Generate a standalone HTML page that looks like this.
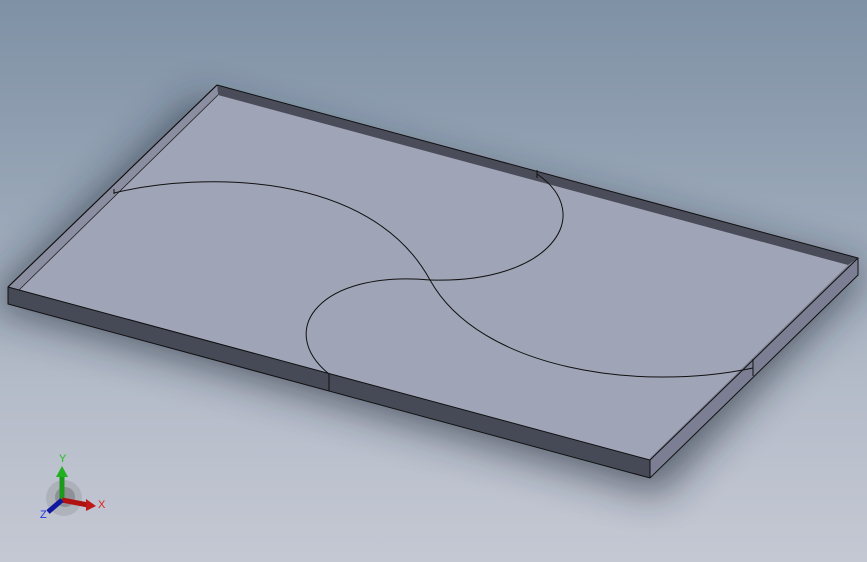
<!DOCTYPE html>
<html><head><style>
html,body{margin:0;padding:0;width:867px;height:562px;overflow:hidden}
body{background:linear-gradient(180deg,#7f91a5 0%,#97a5b6 35%,#b5bcc9 70%,#c4c8d3 100%)}
</style></head><body>
<svg width="867" height="562" viewBox="0 0 867 562" xmlns="http://www.w3.org/2000/svg" style="position:absolute;left:0;top:0">
<defs>
<filter id="b" x="-20%" y="-20%" width="140%" height="140%"><feGaussianBlur stdDeviation="20"/></filter>
</defs>
<polygon points="195,100 870,270 660,495 -15,305" fill="#1e2834" opacity="0.6" filter="url(#b)"/>
<polygon points="217,85 858,258 650,460 8,287" fill="#a0a4b7"/>
<polygon points="217,85 858,258 848,265 218,95" fill="#4a4d59"/>
<polygon points="217,85 218,95 17,292 8,287" fill="#8a8ea0"/>
<line x1="217" y1="85" x2="8" y2="287" stroke="#111" stroke-width="1"/>
<line x1="218" y1="95" x2="17" y2="292" stroke="#222" stroke-width="0.8"/>
<polygon points="858,258 848,265 650,458 650,460" fill="#7a7e90"/>
<polygon points="8,287 650,460 650,478 8,304" fill="#464956"/>
<polygon points="650,460 858,258 858,275 650,478" fill="#7c7f93"/>
<g stroke="#111" stroke-width="1" fill="none">
<polyline points="217,85 858,258 858,275 650,478 8,304 8,287 217,85"/>
<line x1="650" y1="460" x2="650" y2="478"/>
<line x1="8" y1="287" x2="650" y2="460"/>
<line x1="650" y1="460" x2="858" y2="258"/>
<line x1="329" y1="374" x2="329" y2="391"/>
<line x1="753" y1="359" x2="753" y2="376"/>
<line x1="537" y1="170" x2="537" y2="178"/>
<line x1="114" y1="189" x2="114" y2="194"/>
<path d="M114,193 C200,172 370,170 430,280"/>
<path d="M537,174 C597,215 550,284 430,280"/>
<path d="M430,280 C480,370 640,392 753,368"/>
<path d="M329,374 C275,330 320,270 430,280"/>
</g>
<circle cx="64" cy="498" r="18" fill="#888" opacity="0.3"/>
<circle cx="65" cy="497" r="10" fill="#555" opacity="0.35"/>
<line x1="62" y1="500" x2="62" y2="475" stroke="#1a9a1a" stroke-width="5"/>
<polygon points="56,477 68,477 62,466" fill="#22b022"/>
<line x1="62" y1="500" x2="88" y2="505" stroke="#b01010" stroke-width="5"/>
<polygon points="86,499 86,511 96,506" fill="#c01818"/>
<line x1="62" y1="500" x2="48" y2="512" stroke="#1018a0" stroke-width="5"/>
<text x="59" y="462" font-family="Liberation Sans,sans-serif" font-size="11" fill="#20c020">Y</text>
<text x="98" y="508" font-family="Liberation Sans,sans-serif" font-size="11" fill="#e02020">X</text>
<text x="40" y="518" font-family="Liberation Sans,sans-serif" font-size="11" fill="#2030e0">Z</text>
</svg>
</body></html>
